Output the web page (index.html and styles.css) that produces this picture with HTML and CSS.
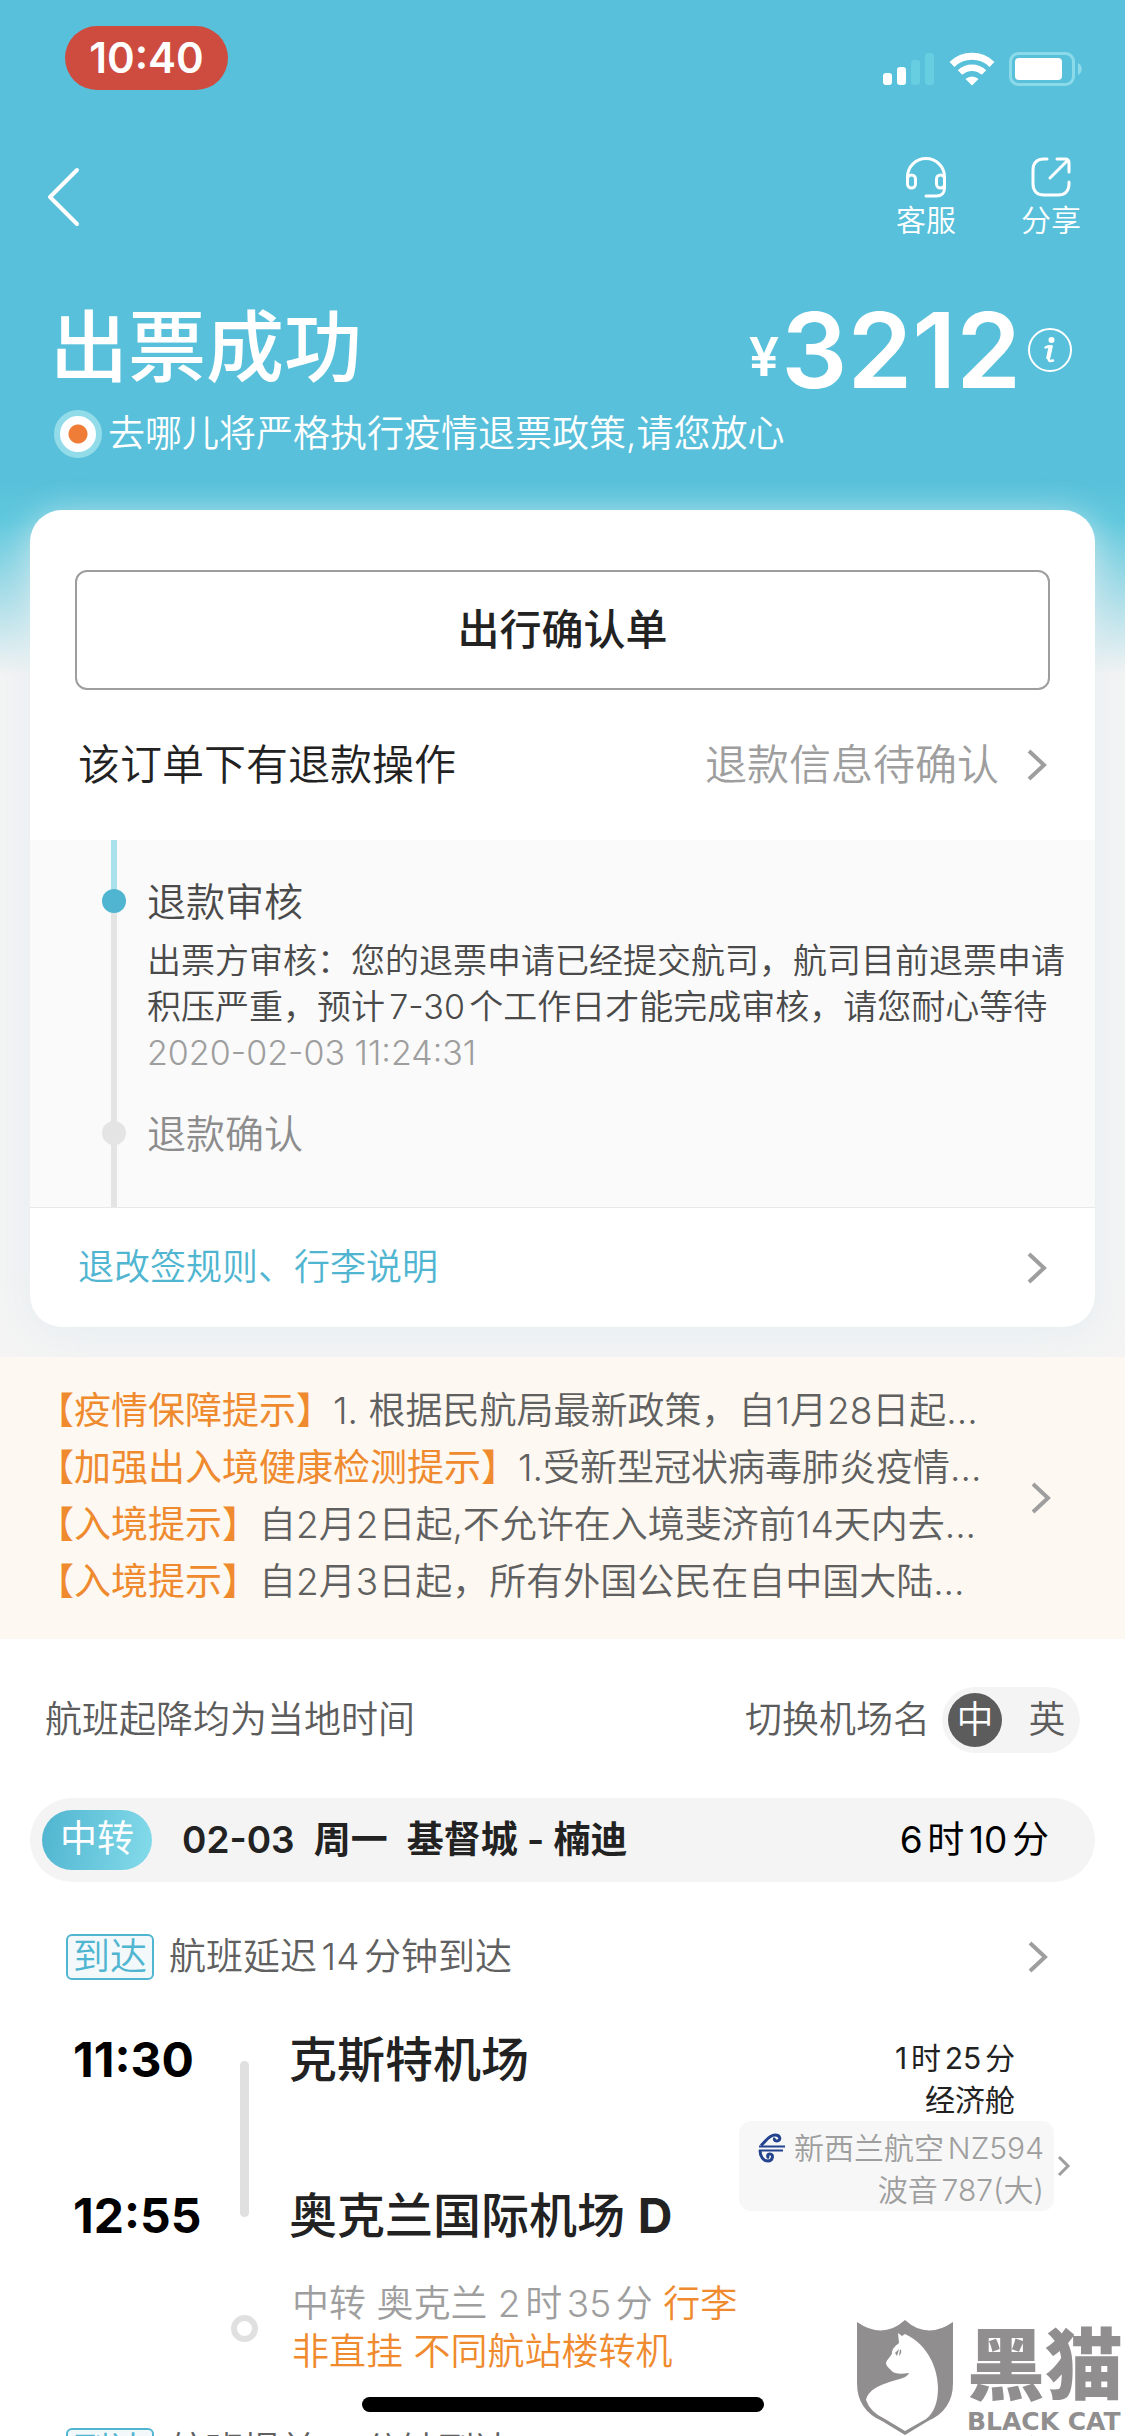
FILE: index.html
```html
<!DOCTYPE html>
<html lang="zh-CN">
<head>
  <meta charset="UTF-8">
  <meta name="viewport" content="width=device-width, initial-scale=1">
  <title>订单详情</title>
  <link rel="stylesheet" href="styles.css">
</head>
<body>
  <div class="screen">
    <header class="hero">
      <div class="status-bar">
        <span class="clock">10:40</span>
        <div class="status-icons">
          <svg width="52" height="34" viewBox="0 0 52 34" fill="#fff">
            <rect x="0" y="21" width="9" height="12" rx="3"/>
            <rect x="14" y="15" width="9" height="18" rx="3"/>
            <rect x="28" y="8" width="9" height="25" rx="3" fill="#67cde1"/>
            <rect x="42" y="1" width="9" height="32" rx="3" fill="#67cde1"/>
          </svg>
          <svg width="46" height="34" viewBox="0 0 46 34" fill="none" stroke="#fff" stroke-width="7">
            <path d="M3 12.500a28.500 28.500 0 0 1 40 0"/>
            <path d="M11 20.500a17.300 17.300 0 0 1 24 0" stroke-width="6.500"/>
            <path d="M23 33.500L16.500 27a9.500 9.500 0 0 1 13 0z" fill="#fff" stroke="none"/>
          </svg>
          <svg width="74" height="34" viewBox="0 0 74 34">
            <rect x="1.500" y="1.500" width="63" height="31" rx="8" fill="none" stroke="#8bdae9" stroke-width="3"/>
            <rect x="6" y="6" width="47" height="22" rx="4" fill="#fff"/>
            <path d="M69 11c5 2 5 10 0 12z" fill="#8bdae9"/>
          </svg>
        </div>
      </div>

      <nav class="nav">
        <button class="icon-btn" aria-label="返回">
          <svg width="34" height="60" viewBox="0 0 34 60" fill="none" stroke="#fff" stroke-width="4" stroke-linecap="round" stroke-linejoin="round">
            <path d="M31 3L4 30l27 27"/>
          </svg>
        </button>
        <div class="nav-actions">
          <button class="icon-btn">
            <svg width="42" height="42" viewBox="0 0 42 42" fill="none" stroke="#fff" stroke-width="3" stroke-linecap="round">
              <path d="M2.500 26v-5a18.500 18.500 0 0 1 37 0v11c0 5-3 8-8 8H21"/>
              <rect x="2.500" y="19" width="8" height="13" rx="4"/>
              <rect x="31.500" y="19" width="8" height="13" rx="4"/>
            </svg>
            <span>客服</span>
          </button>
          <button class="icon-btn">
            <svg width="42" height="42" viewBox="0 0 42 42" fill="none" stroke="#fff" stroke-width="3" stroke-linecap="round" stroke-linejoin="round">
              <path d="M17 3h-3C7 3 3 7 3 14v14c0 7 4 11 11 11h14c7 0 11-4 11-11v-2"/>
              <path d="M27 3h8c3 0 4 1 4 4v9M37 5L20 22"/>
            </svg>
            <span>分享</span>
          </button>
        </div>
      </nav>

      <div class="summary">
        <h1>出票成功</h1>
        <div class="price">
          <span class="yen">¥</span><span class="amount">3212</span>
          <svg width="46" height="46" viewBox="0 0 46 46">
            <circle cx="23" cy="23" r="21" fill="none" stroke="#fff" stroke-width="2"/>
            <circle cx="24.500" cy="13" r="3" fill="#fff"/>
            <path d="M18.500 20.500q3-1.500 6-1l-3 12q-.5 3.500 4.500 2" fill="none" stroke="#fff" stroke-width="2.500" stroke-linecap="round"/>
            <path d="M23.500 20l-2.500 12" stroke="#fff" stroke-width="4"/>
          </svg>
        </div>
      </div>
      <p class="promise"><i class="promise-dot"></i>去哪儿将严格执行疫情退票政策,请您放心</p>
    </header>

    <section class="card">
      <button class="confirm-btn">出行确认单</button>
      <a class="refund-row" href="#">
        <span>该订单下有退款操作</span>
        <span class="refund-state">退款信息待确认</span>
        <svg class="chevron" viewBox="0 0 20 32"><path d="M2 2l15 14L2 30"/></svg>
      </a>
      <ol class="timeline">
        <li class="step active">
          <h2>退款审核</h2>
          <p>出票方审核：您的退票申请已经提交航司，航司目前退票申请<br>积压严重，预计7-30个工作日才能完成审核，请您耐心等待</p>
          <time>2020-02-03 11:24:31</time>
        </li>
        <li class="step">
          <h2>退款确认</h2>
        </li>
      </ol>
      <a class="rules-row" href="#">
        <span>退改签规则、行李说明</span>
        <svg class="chevron" viewBox="0 0 20 32"><path d="M2 2l15 14L2 30"/></svg>
      </a>
    </section>

    <a class="notices" href="#">
      <ul>
        <li><b>【疫情保障提示】</b>1. 根据民航局最新政策，自1月28日起...</li>
        <li><b>【加强出入境健康检测提示】</b>1.受新型冠状病毒肺炎疫情...</li>
        <li><b>【入境提示】</b>自2月2日起,不允许在入境斐济前14天内去...</li>
        <li><b>【入境提示】</b>自2月3日起，所有外国公民在自中国大陆...</li>
      </ul>
      <svg class="chevron" viewBox="0 0 20 32"><path d="M2 2l15 14L2 30"/></svg>
    </a>

    <main class="trip">
      <div class="tools">
        <span>航班起降均为当地时间</span>
        <span class="switch-label">切换机场名</span>
        <div class="lang-switch">
          <button class="on">中</button>
          <button>英</button>
        </div>
      </div>

      <div class="leg-bar">
        <span class="leg-tag">中转</span>
        <span class="leg-title"><span>02-03</span><span>周一</span><span>基督城 - 楠迪</span></span>
        <span class="leg-time">6时10分</span>
      </div>

      <a class="flight-status" href="#">
        <span class="tag">到达</span>
        <span class="status-text">航班延迟14分钟到达</span>
        <svg class="chevron" viewBox="0 0 20 32"><path d="M2 2l15 14L2 30"/></svg>
      </a>

      <div class="flight">
        <div class="times">
          <time>11:30</time>
          <time>12:55</time>
        </div>
        <div class="track"></div>
        <div class="airports">
          <span>克斯特机场</span>
          <span>奥克兰国际机场 <b>D</b></span>
        </div>
        <div class="info">
          <p>1时25分<br>经济舱</p>
          <a class="plane" href="#">
            <span class="plane-box">
              <span class="carrier">
                <svg width="28" height="30" viewBox="0 0 28 30" fill="none" stroke="#23438f" stroke-width="3">
                  <path d="M1 13.500h26M1 17.500h24" stroke-width="2"/>
                  <path d="M3 12.500C8 8 11 2 17 2c6 0 6 6 2 6-3 0-3-2-2-3"/>
                  <path d="M2 17c0 6 3 11 8 11 5 0 6-7 2-7-3 0-3 3-1 4"/>
                </svg>新西兰航空NZ594
              </span>
              波音787(大)
            </span>
            <svg class="chevron-sm" viewBox="0 0 14 22"><path d="M2 2l9 9-9 9"/></svg>
          </a>
        </div>
      </div>

      <div class="layover">
        <i class="ring"></i>
        <p>中转 奥克兰 2时35分 <em>行李<br>非直挂 不同航站楼转机</em></p>
      </div>

      <a class="flight-status" href="#">
        <span class="tag">到达</span>
        <span class="status-text">航班提前10分钟到达</span>
        <svg class="chevron" viewBox="0 0 20 32"><path d="M2 2l15 14L2 30"/></svg>
      </a>
    </main>

    <div class="home-bar"></div>

    <div class="watermark">
      <svg width="98" height="116" viewBox="0 0 98 116">
        <path d="M1 2q26 18 48-2q22 20 48 2v61q0 27-25 38L49 115L26 101Q1 90 1 63z" fill="#908e8f"/>
        <path d="M42 13l4 3 3-2C73 25 82 50 82 68c0 14-4 25-12 31L49 111L29 99Q14 92 10 80C13 68 27 64 40 60c8-2 12-4 13-7-7 1-13 1-16-1-3-3-7-6-7-9 1-4 5-6 6-10 0-4 3-7 7-10z" fill="#fff"/>
        <path d="M39 33l4-4-2 7zM44 29q3 3-1 7z" fill="#908e8f"/>
      </svg>
      <div class="watermark-name">
        <strong>黑猫</strong>
        <span>BLACK CAT</span>
      </div>
    </div>
  </div>
</body>
</html>
```
FILE: styles.css
```css
* {
  box-sizing: border-box;
}
body {
  margin: 0;
  font-family: Inter, "Noto Sans CJK SC", sans-serif;
  font-size: 37px;
  font-weight: 350;
  line-height: 1.3;
  text-autospace: normal;
  color: #222;
  background: #fff;
}
h1, h2, p, ul, ol {
  margin: 0;
  padding: 0;
  font-weight: inherit;
  list-style: none;
}
a {
  color: inherit;
  text-decoration: none;
}
button {
  padding: 0;
  border: 0;
  background: none;
  font: inherit;
  color: inherit;
}
svg {
  display: block;
  flex: none;
}
.screen {
  position: relative;
  height: 100vh;
  overflow: hidden;
  background: linear-gradient(#58c0da 480px, #5fc8dd 520px, #f4f4f4 675px);
}

/* header */
.hero {
  height: 510px;
  color: #fff;
}
.status-bar {
  display: flex;
  justify-content: space-between;
  padding: 26px 42px 0 65px;
}
.clock {
  width: 163px;
  height: 64px;
  border-radius: 32px;
  background: #cd4c3f;
  font-size: 42px;
  font-weight: 600;
  line-height: 64px;
  text-align: center;
}
.status-icons {
  display: flex;
  gap: 14px;
  padding-top: 26px;
}
.nav {
  display: flex;
  justify-content: space-between;
  padding: 66px 44px 0 46px;
}
.nav-actions {
  display: flex;
  gap: 65px;
}
.icon-btn {
  display: flex;
  flex-direction: column;
  align-items: center;
  justify-content: center;
  gap: 4px;
  font-size: 30px;
  line-height: 36px;
}
.summary {
  display: flex;
  align-items: center;
  justify-content: space-between;
  height: 120px;
  margin-top: 52px;
  padding: 0 52px 0 50px;
}
.summary h1 {
  padding-bottom: 4px;
  font-size: 78px;
  font-weight: 500;
  line-height: 100px;
}
.price {
  display: flex;
  align-items: center;
}
.price svg {
  margin-left: 6px;
}
.yen {
  margin-right: 2px;
  padding-top: 14px;
  font-size: 54px;
  font-weight: 600;
}
.amount {
  font-size: 104px;
  font-weight: 600;
  line-height: 120px;
}
.promise {
  display: flex;
  align-items: center;
  gap: 6px;
  height: 48px;
  padding-left: 54px;
  text-autospace: no-autospace;
}
.promise-dot {
  width: 48px;
  height: 48px;
  border: 6px solid #92dcea;
  border-radius: 50%;
  background: radial-gradient(#ef7d38 9px, #fff 10px);
}

/* order card */
.card {
  margin: 0 30px 30px;
  padding-top: 60px;
  border-radius: 32px;
  background: #fff;
  box-shadow: 0 6px 36px rgba(225, 236, 240, 0.8);
}
.confirm-btn {
  display: block;
  width: calc(100% - 90px);
  height: 120px;
  margin: 0 45px;
  border: 2px solid #9e9e9e;
  border-radius: 12px;
  font-size: 42px;
  font-weight: 500;
}
.refund-row, .rules-row {
  display: flex;
  align-items: center;
  justify-content: space-between;
  padding: 0 48px;
}
.refund-row {
  height: 150px;
  font-size: 42px;
}
.refund-state {
  margin-left: auto;
  margin-right: 28px;
  color: #9e9e9e;
}
.chevron {
  width: 20px;
  height: 32px;
  fill: none;
  stroke: #9e9e9e;
  stroke-width: 4;
}
.timeline {
  padding-left: 81px;
  border-bottom: 1px solid #e6e8ea;
  background: #fafafa;
}
.step {
  position: relative;
  height: 135px;
  padding: 36px 0 0 30px;
  border-left: 6px solid #e4e4e4;
  color: #8c8c8c;
  font-size: 34px;
  line-height: 46px;
}
.step.active {
  height: 232px;
  color: #4a4a4a;
}
.step.active::before {
  content: "";
  position: absolute;
  top: 0;
  left: -6px;
  width: 6px;
  height: 60px;
  background: #a8e1ea;
}
.step::after {
  content: "";
  position: absolute;
  top: 49px;
  left: -15px;
  width: 24px;
  height: 24px;
  border-radius: 50%;
  background: #e4e4e4;
}
.step.active::after {
  background: #50b5d0;
}
.step h2 {
  margin-bottom: 10px;
  font-size: 39px;
  line-height: 52px;
}
.step p {
  white-space: nowrap;
}
.step time {
  display: block;
  color: #9e9e9e;
}
.rules-row {
  height: 119px;
  color: #50b5d0;
  font-size: 36px;
}

/* notices */
.notices {
  display: flex;
  align-items: center;
  justify-content: space-between;
  height: 282px;
  padding: 0 74px 0 37px;
  background: #fdf8f1;
  color: #606060;
  line-height: 57px;
  text-autospace: no-autospace;
  white-space: nowrap;
}
.notices ul {
  padding-bottom: 4px;
}
.notices b {
  color: #ef8a2e;
  font-weight: 400;
}

/* trip */
.trip {
  height: 900px;
  padding: 48px 30px 0;
  background: #fff;
}
.tools {
  display: flex;
  align-items: center;
  height: 66px;
  padding: 0 15px;
  color: #5c5c5c;
}
.switch-label {
  margin-left: auto;
  margin-right: 12px;
}
.lang-switch {
  display: flex;
  justify-content: space-between;
  width: 138px;
  padding: 6px;
  border-radius: 33px;
  background: #f4f4f4;
}
.lang-switch button {
  width: 54px;
  height: 54px;
  border-radius: 50%;
}
.lang-switch .on {
  background: #5c5c5c;
  color: #fff;
}
.leg-bar {
  display: flex;
  align-items: center;
  height: 84px;
  margin-top: 45px;
  padding: 0 46px 0 12px;
  border-radius: 42px;
  background: #f4f4f4;
}
.leg-tag {
  width: 110px;
  height: 60px;
  border-radius: 30px;
  background: linear-gradient(100deg, #50b5d0, #84dbea);
  color: #fff;
  font-weight: 400;
  line-height: 58px;
  text-align: center;
}
.leg-title {
  display: flex;
  align-items: baseline;
  gap: 19px;
  margin-left: 30px;
  font-weight: 600;
}
.leg-time {
  margin-left: auto;
  color: #000;
  font-weight: 400;
}
.flight-status {
  display: flex;
  align-items: center;
  gap: 15px;
  height: 46px;
  margin-top: 52px;
  padding: 0 47px 0 36px;
  color: #606060;
}
.flight-status .chevron {
  margin-left: auto;
}
.tag {
  width: 88px;
  height: 46px;
  border: 2px solid #50b5d0;
  border-radius: 6px;
  background: #f3f9fa;
  color: #50b5d0;
  line-height: 42px;
  text-align: center;
}
.flight {
  display: flex;
  height: 230px;
  margin-top: 50px;
  padding: 0 24px 0 43px;
}
.times, .airports {
  display: flex;
  flex-direction: column;
  justify-content: space-between;
  height: 216px;
  font-size: 48px;
  font-weight: 700;
  line-height: 60px;
}
.times {
  width: 167px;
  color: #000;
}
.track {
  width: 9px;
  height: 156px;
  margin: 31px 40px 0 0;
  border-radius: 5px;
  background: #e0e0e0;
}
.airports {
  font-weight: 500;
}
.info {
  margin: 7px 0 0 auto;
  font-size: 30px;
  line-height: 42px;
  text-align: right;
}
.info p {
  padding-right: 56px;
  font-weight: 400;
}
.plane {
  display: flex;
  align-items: center;
  gap: 3px;
  color: #9e9e9e;
}
.plane-box {
  width: 315px;
  height: 90px;
  padding: 6px 10px 0 0;
  border-radius: 12px;
  background: #f7f7f7;
}
.carrier {
  display: flex;
  align-items: center;
  justify-content: flex-end;
  gap: 8px;
}
.chevron-sm {
  width: 14px;
  height: 22px;
  fill: none;
  stroke: #9e9e9e;
  stroke-width: 3;
}
.layover {
  display: flex;
  align-items: center;
  gap: 34px;
  margin-top: 20px;
  padding-left: 201px;
  color: #9e9e9e;
  line-height: 48px;
}
.layover em {
  color: #ef8a2e;
  font-style: normal;
}
.ring {
  width: 27px;
  height: 27px;
  border: 6px solid #e0e0e0;
  border-radius: 50%;
}
.home-bar {
  position: absolute;
  bottom: 24px;
  left: 50%;
  width: 402px;
  height: 15px;
  border-radius: 8px;
  background: #000;
  transform: translateX(-50%);
}
.watermark {
  position: absolute;
  right: 0;
  bottom: 0;
  display: flex;
  gap: 13px;
  color: #908e8f;
}
.watermark-name {
  display: flex;
  flex-direction: column;
  justify-content: flex-end;
  width: 158px;
}
.watermark strong {
  font-size: 78px;
  font-weight: 900;
  line-height: 84px;
}
.watermark span {
  font-family: "DejaVu Sans", sans-serif;
  font-size: 25px;
  font-weight: 700;
  line-height: 28px;
  white-space: nowrap;
}
```
